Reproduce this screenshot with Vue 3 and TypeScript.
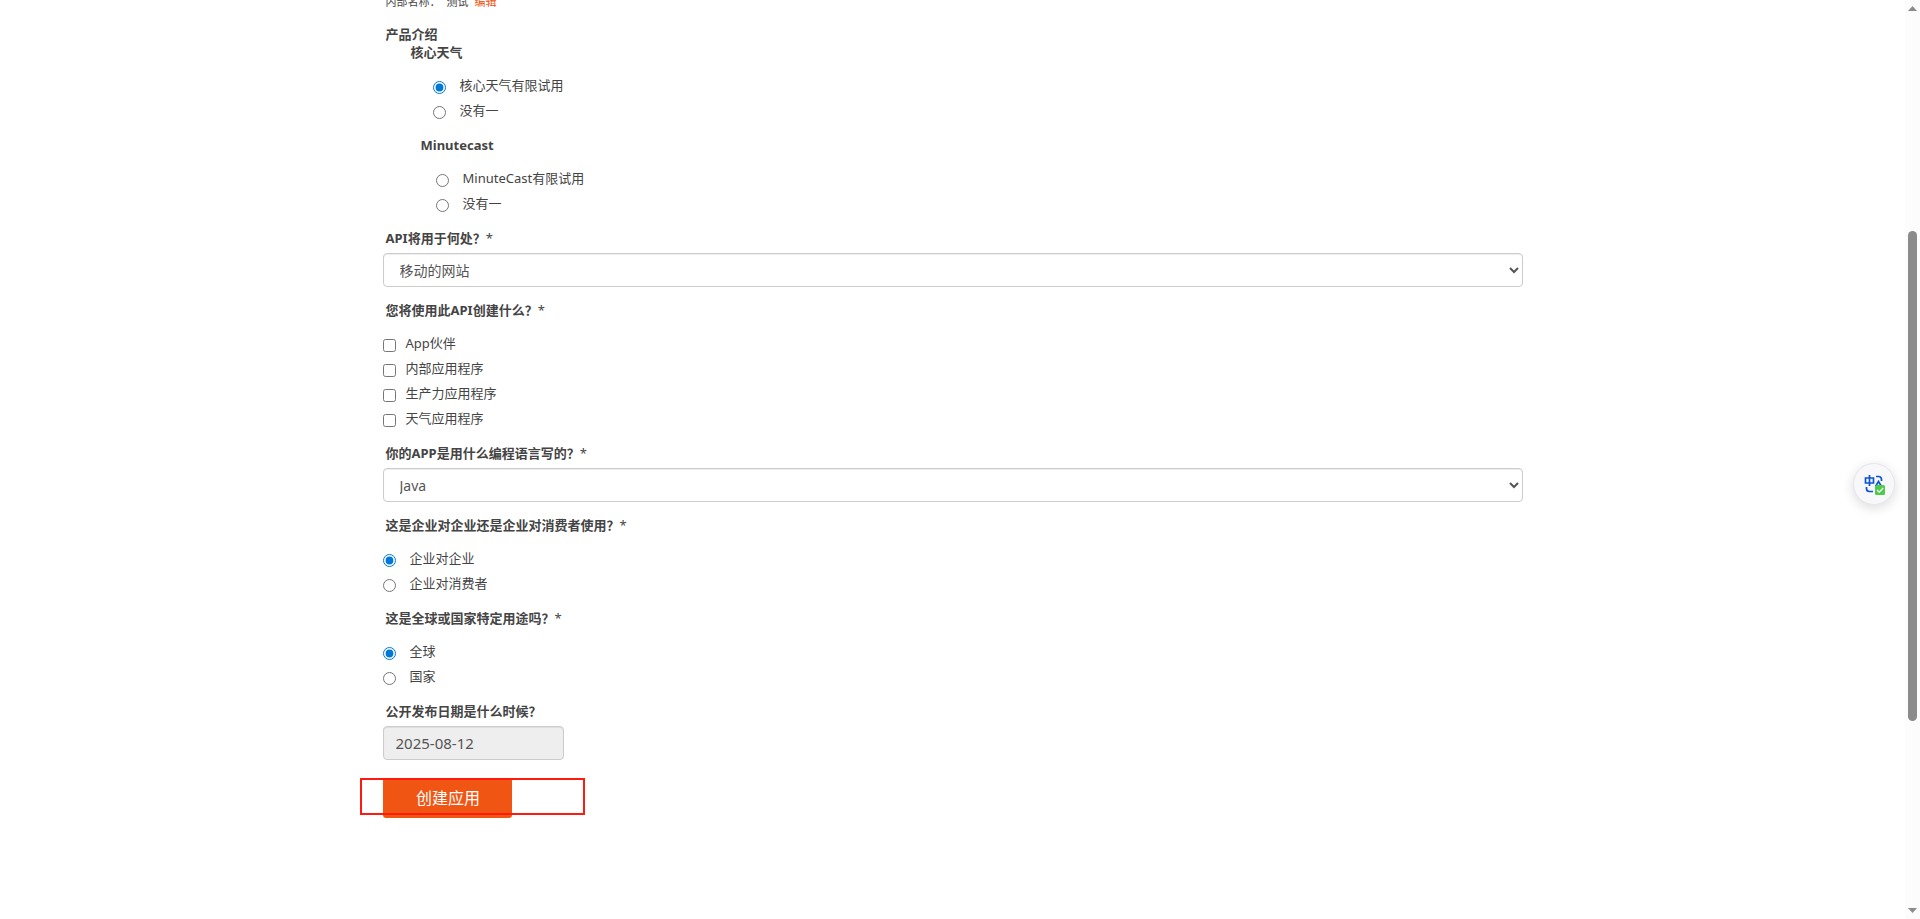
<script setup lang="ts">
import { ref } from 'vue'

interface Choice {
  value: string
  label: string
}

const coreWeather = ref('trial')
const minutecast = ref('')
const platform = ref('mobile-web')
const purposes = ref<string[]>([])
const language = ref('java')
const audience = ref('b2b')
const region = ref('global')
const releaseDate = ref('2025-08-12')

const coreChoices: Choice[] = [
  { value: 'trial', label: '核心天气有限试用' },
  { value: 'none', label: '没有一' },
]
const minutecastChoices: Choice[] = [
  { value: 'trial', label: 'MinuteCast有限试用' },
  { value: 'none', label: '没有一' },
]
const purposeChoices: Choice[] = [
  { value: 'companion', label: 'App伙伴' },
  { value: 'internal', label: '内部应用程序' },
  { value: 'productivity', label: '生产力应用程序' },
  { value: 'weather', label: '天气应用程序' },
]
const audienceChoices: Choice[] = [
  { value: 'b2b', label: '企业对企业' },
  { value: 'b2c', label: '企业对消费者' },
]
const regionChoices: Choice[] = [
  { value: 'global', label: '全球' },
  { value: 'country', label: '国家' },
]
</script>

<template>
  <div class="viewport">
    <main class="page">
      <form class="form" @submit.prevent>
        <p class="internal-name">
          <span>内部名称：</span>
          <span>测试</span>
          <a href="#">编辑</a>
        </p>

        <h2 class="title">产品介绍</h2>
        <fieldset class="field core">
          <legend class="title">核心天气</legend>
          <div class="choices">
            <label v-for="c in coreChoices" :key="c.value" class="choice">
              <input v-model="coreWeather" type="radio" name="core" :value="c.value" />
              <span>{{ c.label }}</span>
            </label>
          </div>
        </fieldset>

        <fieldset class="field minute">
          <legend class="title">Minutecast</legend>
          <div class="choices">
            <label v-for="c in minutecastChoices" :key="c.value" class="choice">
              <input v-model="minutecast" type="radio" name="minutecast" :value="c.value" />
              <span>{{ c.label }}</span>
            </label>
          </div>
        </fieldset>

        <div class="field">
          <label class="title" for="platform">API将用于何处？<span class="star">*</span></label>
          <select id="platform" v-model="platform" class="control">
            <option value="mobile-web">移动的网站</option>
          </select>
        </div>

        <fieldset class="field">
          <legend class="title">您将使用此API创建什么？<span class="star">*</span></legend>
          <div class="choices">
            <label v-for="c in purposeChoices" :key="c.value" class="choice check">
              <input v-model="purposes" type="checkbox" :value="c.value" />
              <span>{{ c.label }}</span>
            </label>
          </div>
        </fieldset>

        <div class="field">
          <label class="title" for="language">你的APP是用什么编程语言写的？<span class="star">*</span></label>
          <select id="language" v-model="language" class="control">
            <option value="java">Java</option>
          </select>
        </div>

        <fieldset class="field">
          <legend class="title">这是企业对企业还是企业对消费者使用？<span class="star">*</span></legend>
          <div class="choices">
            <label v-for="c in audienceChoices" :key="c.value" class="choice">
              <input v-model="audience" type="radio" name="audience" :value="c.value" />
              <span>{{ c.label }}</span>
            </label>
          </div>
        </fieldset>

        <fieldset class="field">
          <legend class="title">这是全球或国家特定用途吗？<span class="star">*</span></legend>
          <div class="choices">
            <label v-for="c in regionChoices" :key="c.value" class="choice">
              <input v-model="region" type="radio" name="region" :value="c.value" />
              <span>{{ c.label }}</span>
            </label>
          </div>
        </fieldset>

        <div class="field">
          <label class="title" for="release">公开发布日期是什么时候？</label>
          <input id="release" v-model="releaseDate" class="control date" type="text" readonly />
        </div>

        <div class="actions">
          <button class="submit" type="submit">创建应用</button>
          <span class="highlight"></span>
        </div>
      </form>

      <button class="translate" type="button" aria-label="翻译">
        <svg width="22" height="22" viewBox="0 0 22 22" fill="none">
          <g stroke="#0f53d6" stroke-width="1.700">
            <path d="M2.500 5h8v5h-8zM6.500 2v11" />
            <path d="M13 3.500h2.500q3 0 3 3v1.500" />
            <path d="M3.500 14v1.500q0 3 3 3H10" />
            <path d="M12.500 13.500l3-5 3 5" />
          </g>
          <rect x="12" y="12" width="10" height="10" rx="1.500" fill="#4ecb4b" />
          <path d="M14 17l2.200 2.200 4-4.200" stroke="#fff" stroke-width="1.200" />
        </svg>
      </button>
    </main>

    <div class="scrollbar" aria-hidden="true">
      <svg width="9" height="5" viewBox="0 0 9 5"><path d="M4.500 0L9 5H0z" fill="#8b8b8b" /></svg>
      <div class="track">
        <span class="before"></span>
        <span class="thumb"></span>
        <span class="after"></span>
      </div>
      <svg width="9" height="5" viewBox="0 0 9 5"><path d="M0 0h9L4.500 5z" fill="#8b8b8b" /></svg>
    </div>
  </div>
</template>

<style>
body {
  margin: 0;
  background: #fff;
}
</style>

<style scoped>
* {
  box-sizing: border-box;
}
.viewport {
  display: flex;
  height: 100vh;
  overflow: hidden;
  color: #444;
  font: 13px/18px "Noto Sans", "Noto Sans CJK SC", sans-serif;
}
.page {
  position: relative;
  flex: 1;
  min-width: 0;
  overflow: hidden;
}
.form {
  max-width: 1170px;
  margin: -7px auto 0;
  padding: 0 15px;
}
.internal-name {
  display: flex;
  margin: 0 0 15px;
  padding-left: 3px;
  font-size: 11px;
  gap: 6px;
}
.internal-name a {
  color: #f05514;
  text-decoration: none;
}
.field {
  min-width: 0;
  margin: 0 0 15px;
  padding: 0;
  border: 0;
}
.title {
  display: block;
  margin: 0;
  padding: 0 0 2px 3px;
  font-size: 13px;
  font-weight: 700;
  line-height: 16px;
}
.star {
  font-weight: 400;
}
.core {
  padding-left: 25px;
}
.core .choices {
  padding-left: 25px;
}
.minute {
  padding-left: 35px;
}
.minute .choices {
  padding-left: 18px;
}
.choices {
  display: flex;
  flex-direction: column;
  align-items: flex-start;
  gap: 5px;
  margin-top: 15px;
}
.choice {
  display: flex;
  align-items: center;
  gap: 14px;
  height: 20px;
}
.choice.check {
  gap: 10px;
}
.choice span {
  padding-bottom: 4px;
}
.choice input {
  width: 13px;
  height: 13px;
  margin: 1px 0 0;
  accent-color: #0078d7;
}
.control {
  display: block;
  width: 100%;
  height: 34px;
  margin-top: 5px;
  padding: 6px 12px;
  border: 1px solid #ccc;
  border-radius: 4px;
  background-color: #fff;
  box-shadow: inset 0 1px 1px rgba(0, 0, 0, 0.075);
  color: #555;
  font-family: inherit;
  font-size: 14px;
  line-height: 20px;
}
select.control {
  padding: 6px 0 6px 12px;
}
.date {
  width: 181px;
  background-color: #eee;
  font-size: 15px;
}
.actions {
  position: relative;
  margin-top: 18px;
}
.submit {
  display: block;
  width: 129px;
  height: 40px;
  padding: 0 0 2px 2px;
  border: 0;
  border-radius: 3px;
  background: #f05514;
  color: #fff;
  font-family: inherit;
  font-size: 16px;
}
.highlight {
  position: absolute;
  top: 0;
  left: -23px;
  width: 225px;
  height: 37px;
  border: 2px solid #ff1a10;
  pointer-events: none;
}
.translate {
  position: absolute;
  top: 463px;
  right: 10px;
  display: flex;
  align-items: center;
  justify-content: center;
  width: 42px;
  height: 42px;
  padding: 0;
  border: 1px solid #e6e6ee;
  border-radius: 50%;
  background: #f8f8fa;
  box-shadow: 0 3px 12px rgba(0, 0, 0, 0.14);
}
.scrollbar {
  display: flex;
  flex-direction: column;
  align-items: center;
  width: 15px;
  padding: 6px 0;
  background: #fcfcfc;
}
.track {
  display: flex;
  flex: 1;
  flex-direction: column;
  width: 9px;
}
.before {
  flex: 220;
}
.thumb {
  flex: 490;
  border-radius: 5px;
  background: #8b8b8b;
}
.after {
  flex: 187;
}
</style>
